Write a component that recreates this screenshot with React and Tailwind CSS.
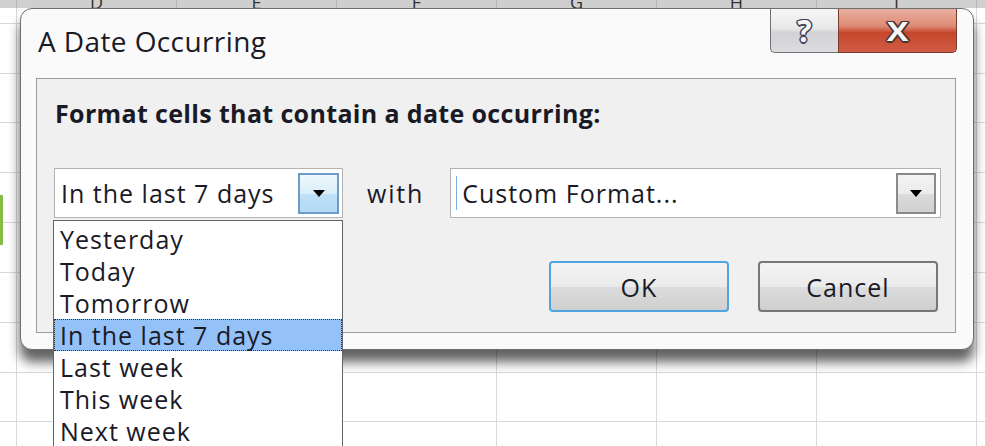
import React from "react";

const letters = ["D", "E", "F", "G", "H", "I"];
const rowHeights = [16, 50, 49, 50, 50, 50, 50, 50, 49, 50];
const options = [
  "Yesterday",
  "Today",
  "Tomorrow",
  "In the last 7 days",
  "Last week",
  "This week",
  "Next week",
];

function Arrow() {
  return (
    <svg width="12" height="7" viewBox="0 0 12 7">
      <path d="M0 0h12L6 7z" fill="#000" />
    </svg>
  );
}

function Sheet() {
  return (
    <div className="flex flex-col">
      <div className="flex h-[8px] overflow-hidden bg-[#cfcfcf]">
        <div className="w-[17px] shrink-0 border-r border-[#b8b8b8]" />
        {letters.map((l) => (
          <div
            key={l}
            className="flex w-[160px] shrink-0 items-end justify-center border-r border-[#b8b8b8]"
          >
            <span className="text-[18px] leading-none text-[#333] translate-y-[3px]">{l}</span>
          </div>
        ))}
      </div>
      <div className="grid grid-cols-[17px_repeat(6,160px)_1fr]">
        {rowHeights.map((h, r) =>
          Array.from({ length: 8 }).map((_, c) => (
            <div
              key={r + "-" + c}
              style={{ height: h }}
              className="border-r border-b border-[#d9d9d9]"
            />
          ))
        )}
      </div>
    </div>
  );
}

export default function App() {
  return (
    <div className="relative h-[446px] w-[986px] overflow-hidden bg-white font-['Open_Sans',sans-serif] font-medium text-[#1a1a26]">
      <Sheet />
      {/* active cell edge */}
      <div className="absolute left-0 top-[195px] h-[50px] w-[3px] bg-[#86bb45]" />

      {/* dialog window */}
      <div className="absolute left-[20px] top-[8px] flex h-[342px] w-[954px] flex-col rounded-[12px] border border-[#6e6e6e] bg-[#fafafa] shadow-[0_12px_12px_rgba(0,0,0,0.62)]">
        <div className="flex h-[69px] items-start justify-between">
          <div className="pl-[17px] pt-[14px] text-[28px] leading-[36px] tracking-[0.4px]">A Date Occurring</div>
          <div className="mr-[16px] flex">
            <div className="flex h-[44px] w-[68px] items-center justify-center rounded-bl-[5px] border-b border-l border-[#707070] bg-[linear-gradient(#f6f6f6,#e8e8e8_45%,#d3d3d6_55%,#dcdce0)]">
              <span className="text-[30px] font-bold leading-none text-[#f6f6fa] [text-shadow:1.5px_0_#45455a,-1.5px_0_#45455a,0_1.5px_#45455a,0_-1.5px_#45455a,1px_1px_#45455a,-1px_-1px_#45455a,1px_-1px_#45455a,-1px_1px_#45455a]">
                ?
              </span>
            </div>
            <div className="flex h-[44px] w-[119px] items-center justify-center rounded-br-[5px] border-x border-b border-[#7a3a2c] bg-[linear-gradient(#eab0a2,#dc8a74_40%,#c6472b_55%,#cf5c44)]">
              <span className="scale-x-125 text-[26px] font-bold leading-none text-[#f6f6f6] [text-shadow:1.5px_0_#4a3434,-1.5px_0_#4a3434,0_1.5px_#4a3434,0_-1.5px_#4a3434,1px_1px_#4a3434,-1px_-1px_#4a3434,1px_-1px_#4a3434,-1px_1px_#4a3434]">
                X
              </span>
            </div>
          </div>
        </div>

        {/* group box */}
        <div className="ml-[15px] flex h-[255px] w-[920px] flex-col border border-[#9c9c9c] bg-[#f0f0f0] text-[25px] tracking-[1px]">
          <div className="pl-[18px] pt-[18px] font-bold leading-[32px] tracking-[0.35px]">
            Format cells that contain a date occurring:
          </div>
          <div className="mt-[39px] flex h-[50px] items-center pl-[17px]">
            <div className="flex h-[50px] w-[289px] items-center justify-between border border-[#b3b3b3] bg-white pl-[6px] pr-[3px]">
              <span className="leading-[32px]">In the last 7 days</span>
              <div className="flex h-[41px] w-[41px] items-center justify-center border-2 border-[#6f9bcc] bg-[linear-gradient(#eef7fd,#d9eefb_50%,#bfe0f6_51%,#b3daf5)]">
                <Arrow />
              </div>
            </div>
            <span className="ml-[24px] leading-[32px] tracking-[1.8px]">with</span>
            <div className="ml-[26px] flex h-[50px] w-[491px] items-center justify-between border border-[#b3b3b3] bg-white pl-[5px] pr-[4px]">
              <div className="flex items-center">
                <div className="h-[34px] w-px bg-[#7aaee6]" />
                <span className="ml-[5px] leading-[32px]">Custom Format...</span>
              </div>
              <div className="flex h-[41px] w-[40px] items-center justify-center border-2 border-[#8a8a8a] bg-[linear-gradient(#f3f3f3,#ececec_50%,#dcdcdc_51%,#d0d0d0)]">
                <Arrow />
              </div>
            </div>
          </div>
          <div className="mt-[43px] flex justify-end gap-[29px] pr-[17px]">
            <button className="flex h-[51px] w-[180px] items-center justify-center rounded-[4px] border-2 border-[#4ea5df] bg-[linear-gradient(#f3f3f3,#ebebeb_50%,#dddddd_51%,#cfcfcf)] leading-[32px]">
              OK
            </button>
            <button className="flex h-[51px] w-[180px] items-center justify-center rounded-[4px] border-2 border-[#777] bg-[linear-gradient(#f3f3f3,#ebebeb_50%,#dddddd_51%,#cfcfcf)] leading-[32px]">
              Cancel
            </button>
          </div>
        </div>
      </div>

      {/* open dropdown list */}
      <div className="absolute left-[53px] top-[220px] w-[290px] border border-[#646464] bg-white pt-[2px] text-[25px] tracking-[1px]">
        {options.map((o) => (
          <div
            key={o}
            className={
              o === "In the last 7 days"
                ? "h-[32px] border border-dotted border-[#3a3020] bg-[#94c2f8] pl-[5px] leading-[30px]"
                : "h-[32px] pl-[6px] leading-[32px]"
            }
          >
            {o}
          </div>
        ))}
      </div>
    </div>
  );
}
